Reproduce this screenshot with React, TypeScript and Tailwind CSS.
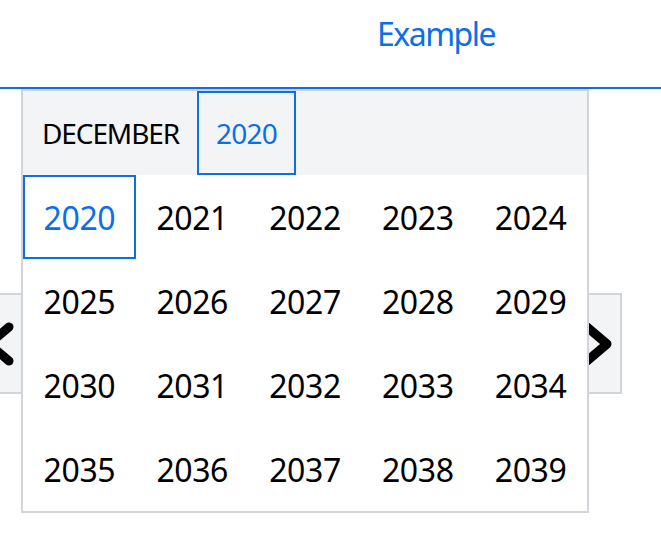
import { ReactNode } from "react";

const years = Array.from({ length: 20 }, (_, i) => 2020 + i);
const selectedYear = 2020;

function Chevron({ dir }: { dir: "left" | "right" }) {
    const points = dir === "right" ? "5,5 25,22 5,39" : "25,5 5,22 25,39";
    return (
        <svg width="30" height="44" viewBox="0 0 30 44" className="shrink-0">
            <polyline
                points={points}
                fill="none"
                stroke="black"
                strokeWidth="9"
                strokeLinecap="round"
                strokeLinejoin="round"
            />
        </svg>
    );
}

function YearCell({ year, active }: { year: number; active: boolean }): ReactNode {
    return (
        <div
            className={
                active
                    ? "h-[84px] flex items-center justify-center border-2 border-[#0a6fe8] text-[#0a6fe8] pt-[2px]"
                    : "h-[84px] flex items-center justify-center border-2 border-transparent text-black pt-[2px]"
            }
        >
            {year}
        </div>
    );
}

export default function App() {
    return (
        <div className="relative w-[661px] h-[540px] overflow-hidden bg-white font-['Noto_Sans',sans-serif]">
            <nav className="h-[89px] border-b-2 border-[#0a6fe8] flex items-center pl-[377px] pb-[20px]">
                <a className="text-[32px] leading-none tracking-[-1.5px] text-[#0a6fe8]">Example</a>
            </nav>

            <div className="mt-[204px] ml-[-26px] w-[648px] h-[101px] border-2 border-[#d1d5db] bg-[#f3f4f6] flex items-center justify-between px-[8px]">
                <Chevron dir="left" />
                <Chevron dir="right" />
            </div>

            <div className="absolute left-[21px] top-[89px] w-[568px] border-2 border-[#d1d5db] bg-white">
                <div className="h-[84px] flex bg-[#f3f4f6] text-[28px]">
                    <button className="pl-[19px] pr-[18px] flex items-center text-black tracking-[-1.1px]">
                        DECEMBER
                    </button>
                    <button className="px-[17px] flex items-center border-2 border-[#0a6fe8] text-[#0a6fe8] tracking-[-0.8px]">
                        {selectedYear}
                    </button>
                </div>
                <div className="grid grid-cols-5 text-[32px] tracking-[-0.4px]">
                    {years.map((y) => (
                        <YearCell key={y} year={y} active={y === selectedYear} />
                    ))}
                </div>
            </div>
        </div>
    );
}
